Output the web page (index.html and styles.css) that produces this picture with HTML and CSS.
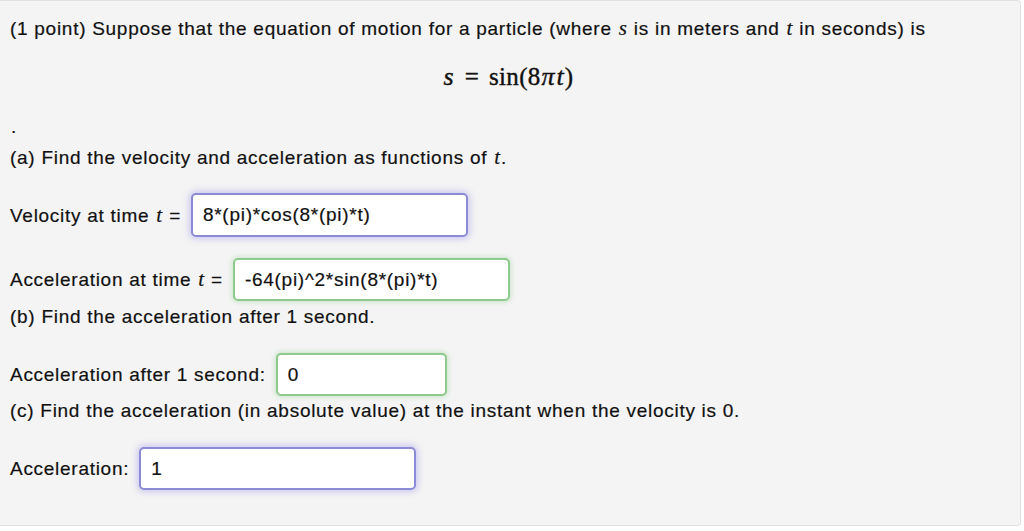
FILE: index.html
```html
<!DOCTYPE html>
<html>
<head>
<meta charset="utf-8">
<link rel="stylesheet" href="styles.css">
</head>
<body>
<div class="panel">
  <p class="line intro">(1 point) Suppose that the equation of motion for a particle (where <span class="mi">s</span> is in meters and <span class="mi">t</span> in seconds) is</p>
  <div class="equation"><span class="mi">s</span><span class="mo">=</span><span class="mrm">sin</span><span class="mrm">(8</span><span class="mi">π</span><span class="mi">t</span><span class="mrm">)</span></div>
  <p class="line dot">.</p>
  <p class="line part-a">(a) Find the velocity and acceleration as functions of <span class="mi">t</span>.</p>
  <div class="row row-vel">
    <span class="label">Velocity at time <span class="mi">t</span> =</span>
    <div class="answer blue w-wide">8*(pi)*cos(8*(pi)*t)</div>
  </div>
  <div class="row row-acc">
    <span class="label">Acceleration at time <span class="mi">t</span> =</span>
    <div class="answer green w-wide">-64(pi)^2*sin(8*(pi)*t)</div>
  </div>
  <p class="line part-b">(b) Find the acceleration after 1 second.</p>
  <div class="row row-after">
    <span class="label">Acceleration after 1 second:</span>
    <div class="answer green w-narrow">0</div>
  </div>
  <p class="line part-c">(c) Find the acceleration (in absolute value) at the instant when the velocity is 0.</p>
  <div class="row row-abs">
    <span class="label">Acceleration:</span>
    <div class="answer blue w-wide">1</div>
  </div>
</div>
</body>
</html>
```
FILE: styles.css
```css
html, body {
  margin: 0;
  padding: 0;
  background: #ffffff;
}
body {
  width: 1024px;
  height: 531px;
  overflow: hidden;
  font-family: "Liberation Sans", Arial, sans-serif;
  font-size: 19px;
  letter-spacing: 0.72px;
  color: #111111;
  -webkit-text-stroke: 0.2px #111111;
}
.panel {
  box-sizing: border-box;
  width: 1021px;
  height: 526px;
  background: #f4f4f4;
  border: 1px solid #e1e1e1;
  border-left: none;
  border-radius: 0 4px 4px 0;
  padding: 16px 0 0 10px;
  display: flex;
  flex-direction: column;
  align-items: flex-start;
}
.line {
  margin: 0;
  line-height: 22px;
  height: 22px;
  white-space: nowrap;
}
.mi {
  font-family: "Liberation Serif", "Times New Roman", serif;
  font-style: italic;
  font-size: 21px;
  letter-spacing: 0;
  padding: 0 1px;
}
.equation {
  align-self: stretch;
  margin-top: 23px;
  height: 30px;
  line-height: 30px;
  text-align: center;
  padding-right: 14px;
  font-family: "Liberation Serif", "Times New Roman", serif;
  font-size: 25px;
  letter-spacing: 0.3px;
  color: #111;
  -webkit-text-stroke: 0.4px #111111;
}
.equation .mi {
  font-size: 26px;
}
.equation .mo {
  margin: 0 10px;
}
.mrm {
  font-style: normal;
}
.dot {
  margin-top: 24px;
  padding-left: 1px;
}
.part-a { margin-top: 8px; }
.row {
  display: flex;
  align-items: center;
  gap: 10px;
  height: 44px;
}
.row-vel { margin-top: 25px; }
.row-acc { margin-top: 21px; height: 43px; }
.part-b { margin-top: 5px; }
.row-after { margin-top: 25px; height: 43px; }
.part-c { margin-top: 4px; }
.row-abs { margin-top: 25px; height: 43px; }
.label {
  white-space: nowrap;
}
.answer {
  box-sizing: border-box;
  height: 100%;
  background: #ffffff;
  border-radius: 5px;
  padding: 0 10px;
  display: flex;
  align-items: center;
  color: #111;
  white-space: nowrap;
}
.blue {
  border: 2px solid #8c8cd6;
  box-shadow: 0 0 6px 2px rgba(130, 120, 230, 0.35);
}
.green {
  border: 2px solid #8ec98e;
  box-shadow: 0 0 5px 1px rgba(100, 190, 100, 0.3);
}
.w-wide { width: 277px; }
.w-narrow { width: 171px; }
```
